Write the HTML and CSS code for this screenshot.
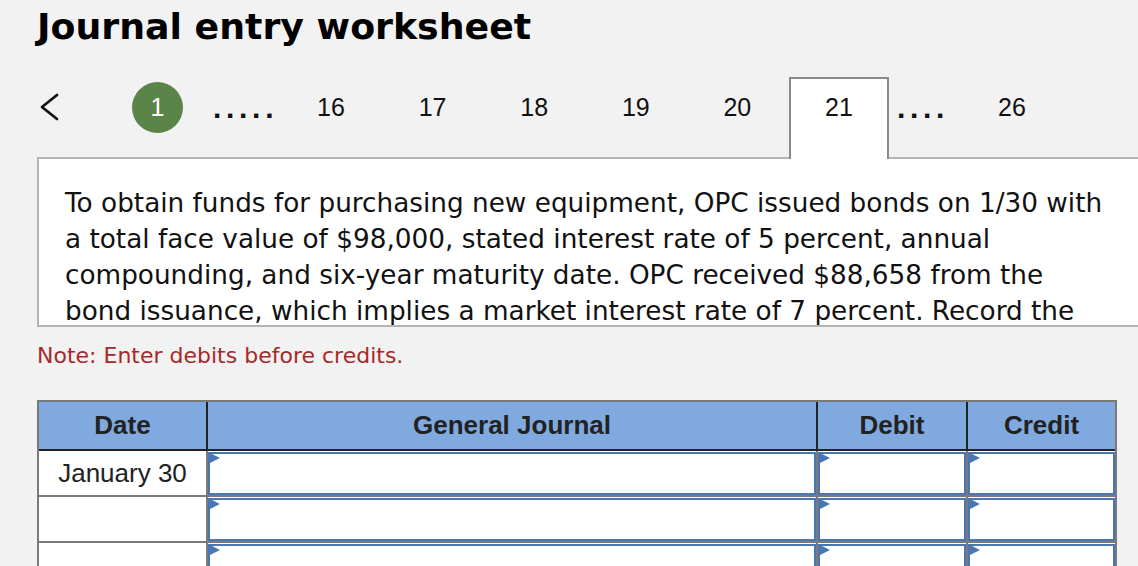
FILE: index.html
```html
<!DOCTYPE html>
<html lang="en">
<head>
<meta charset="utf-8">
<title>Journal entry worksheet</title>
<link rel="stylesheet" href="styles.css">
</head>
<body>
<div class="page">
  <h1 class="title">Journal entry worksheet</h1>
  <nav class="steps">
    <span class="prev"><svg width="30" height="30" viewBox="0 0 30 30"><polyline points="20,3 5,15 20,27" fill="none" stroke="#111" stroke-width="2.8" stroke-linecap="round" stroke-linejoin="round"/></svg></span>
    <span class="step-done">1</span>
    <span class="dots dots-first">.....</span>
    <span class="tab">16</span>
    <span class="tab">17</span>
    <span class="tab">18</span>
    <span class="tab">19</span>
    <span class="tab">20</span>
    <span class="tab tab-active">21</span>
    <span class="dots dots-second">....</span>
    <span class="tab">26</span>
  </nav>
  <div class="question">
    <p>To obtain funds for purchasing new equipment, OPC issued bonds on 1/30 with a total face value of $98,000, stated interest rate of 5 percent, annual compounding, and six-year maturity date. OPC received $88,658 from the bond issuance, which implies a market interest rate of 7 percent. Record the issuance of the bonds.</p>
  </div>
  <p class="note">Note: Enter debits before credits.</p>
  <div class="journal">
    <div class="jhead">
      <div class="hcell">Date</div>
      <div class="hcell">General Journal</div>
      <div class="hcell">Debit</div>
      <div class="hcell">Credit</div>
    </div>
    <div class="jbody">
      <div class="dcell">January 30</div>
      <div class="icell"><div class="field"></div></div>
      <div class="icell"><div class="field"></div></div>
      <div class="icell"><div class="field"></div></div>
      <div class="dcell"></div>
      <div class="icell"><div class="field"></div></div>
      <div class="icell"><div class="field"></div></div>
      <div class="icell"><div class="field"></div></div>
      <div class="dcell"></div>
      <div class="icell"><div class="field"></div></div>
      <div class="icell"><div class="field"></div></div>
      <div class="icell"><div class="field"></div></div>
    </div>
  </div>
</div>
</body>
</html>
```

FILE: styles.css
```css
html, body {
  margin: 0;
  padding: 0;
  background: #f2f2f2;
  overflow: hidden;
}
.page {
  padding-left: 37px;
  width: 1200px;
}
.title {
  margin: 0;
  font-family: "DejaVu Sans", Verdana, sans-serif;
  font-weight: bold;
  font-size: 36.3px;
  line-height: 54px;
  color: #000;
}
.steps {
  display: flex;
  align-items: flex-start;
  height: 80px;
  margin-top: 23px;
  font-family: "Liberation Sans", Arial, sans-serif;
  font-size: 25px;
  color: #111;
}
.prev {
  width: 30px;
  padding-top: 15px;
}
.prev svg { display: block; margin-left: 0; }
.step-done {
  margin-left: 65px;
  margin-top: 5px;
  width: 51px;
  height: 51px;
  border-radius: 50%;
  background: #5b8449;
  color: #fff;
  display: flex;
  align-items: center;
  justify-content: center;
  font-size: 25px;
}
.dots {
  height: 80px;
  line-height: 62px;
  font-weight: bold;
  font-size: 30px;
  letter-spacing: 4.7px;
  box-sizing: border-box;
  white-space: nowrap;
}
.dots-first {
  margin-left: 30px;
  width: 68px;
}
.dots-second {
  width: 73px;
  padding-left: 8px;
}
.tab {
  width: 100px;
  margin-right: 1.6px;
  height: 80px;
  line-height: 60px;
  text-align: center;
  box-sizing: border-box;
}
.tab-active {
  position: relative;
  z-index: 1;
  height: 82px;
  margin-right: 0;
  background: #fff;
  border: 2px solid #8a8a8a;
  border-bottom: none;
  line-height: 56px;
}
.question {
  width: 1120px;
  height: 170px;
  box-sizing: border-box;
  border: 2px solid #b4b4b4;
  background: #fff;
  overflow: hidden;
  padding: 26px 48px 0 26px;
}
.question p {
  margin: 0;
  font-family: "DejaVu Sans", Verdana, sans-serif;
  font-size: 26.3px;
  line-height: 36px;
  color: #111;
}
.note {
  margin: 17px 0 0;
  font-family: "DejaVu Sans", Verdana, sans-serif;
  font-size: 22px;
  line-height: 24px;
  color: #a8282a;
}
.journal {
  margin-top: 32px;
  width: 1080px;
  box-sizing: border-box;
  border: 2px solid #7a7a7a;
  border-bottom: none;
  font-family: "Liberation Sans", Arial, sans-serif;
  font-size: 26px;
  color: #222;
}
.jhead {
  display: grid;
  grid-template-columns: 167px 608px 148px 147px;
  column-gap: 2px;
  background: #222;
  border-bottom: 2px solid #222;
}
.hcell {
  background: #80aadf;
  height: 47px;
  display: flex;
  align-items: center;
  justify-content: center;
  font-weight: bold;
}
.jbody {
  display: grid;
  grid-template-columns: 167px 608px 148px 147px;
  grid-auto-rows: 44px;
  gap: 2px;
  background: #7a7a7a;
}
.dcell {
  background: #fff;
  display: flex;
  align-items: center;
  justify-content: center;
}
.icell {
  background: #fff;
  padding-top: 1px;
}
.field {
  position: relative;
  height: 100%;
  box-sizing: border-box;
  border: 2px solid #4a76b4;
}
.field::before {
  content: "";
  position: absolute;
  top: -1px;
  left: 0;
  border-left: 10px solid #4a76b4;
  border-top: 5.5px solid transparent;
  border-bottom: 5.5px solid transparent;
}
```
